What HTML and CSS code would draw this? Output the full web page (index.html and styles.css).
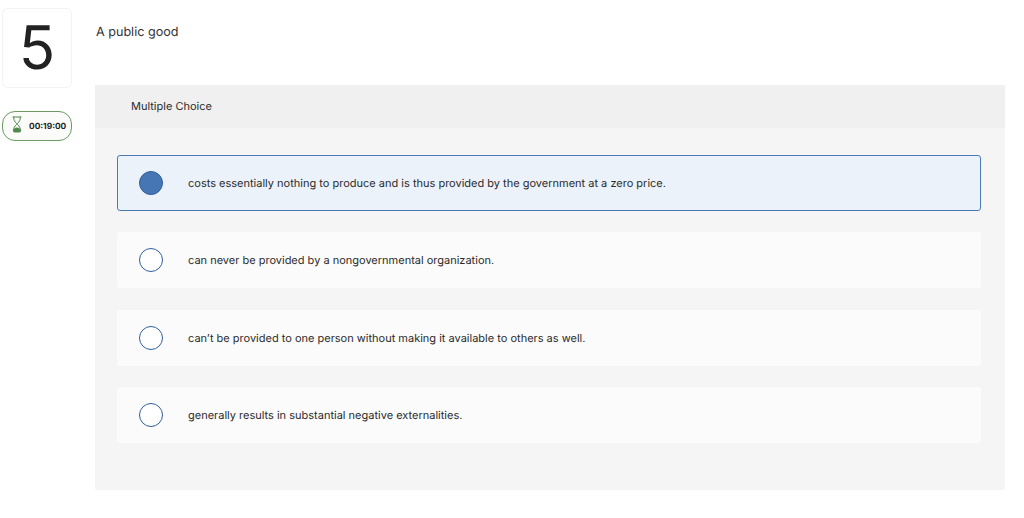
FILE: index.html
```html
<!DOCTYPE html>
<html lang="en">
<head>
<meta charset="utf-8">
<title>Question 5</title>
<link rel="stylesheet" href="styles.css">
</head>
<body>
<div class="page">
  <aside class="side">
    <div class="num">5</div>
    <div class="timer">
      <svg class="glass" width="10" height="17" viewBox="0 0 10 17" aria-hidden="true">
        <path d="M1 1h8M1.7 1c0 3.6 1 4.6 2.4 5.8.8.7.8 1.5 0 2.2C2.6 10.300 1.700 11.500 1.500 14M8.300 1c0 3.600-1 4.600-2.400 5.800-.8.7-.8 1.500 0 2.200 1.500 1.300 2.400 2.500 2.600 5" fill="none" stroke="#4f8a4c" stroke-width="1" stroke-linecap="round"/>
        <path d="M1 15c0-2 2.400-3.400 4-3.400s4 1.400 4 3.400c0 1-1 1.600-4 1.600s-4-.6-4-1.600z" fill="#4f8a4c"/>
      </svg>
      <span class="time">00:19:00</span>
    </div>
  </aside>
  <main class="main">
    <p class="prompt">A public good</p>
    <section class="panel">
      <header class="panel-head">Multiple Choice</header>
      <div class="options">
        <div class="option selected"><span class="radio"></span><span class="label">costs essentially nothing to produce and is thus provided by the government at a zero price.</span></div>
        <div class="option"><span class="radio"></span><span class="label">can never be provided by a nongovernmental organization.</span></div>
        <div class="option"><span class="radio"></span><span class="label">can’t be provided to one person without making it available to others as well.</span></div>
        <div class="option"><span class="radio"></span><span class="label">generally results in substantial negative externalities.</span></div>
      </div>
    </section>
  </main>
</div>
</body>
</html>
```
FILE: styles.css
```css
* { box-sizing: border-box; }
html, body { margin: 0; padding: 0; background: #fff; }
body { font-family: "Inter", "Liberation Sans", sans-serif; color: #2b2b2b; height: 518px; overflow: hidden; text-rendering: geometricPrecision; }
.page { display: flex; padding: 8px 19px 0 2px; gap: 23px; }
.side { width: 70px; flex: none; display: flex; flex-direction: column; gap: 23px; }
.num {
  height: 80px; border: 1px solid #f3f3f3; border-radius: 6px;
  display: flex; align-items: center; justify-content: center;
  font-size: 60px; font-weight: 400; color: #222; line-height: 1;
}
.timer {
  height: 30px; border: 1px solid #6b9a62; border-radius: 13px; background: #fbfcfa;
  display: flex; align-items: center; padding-left: 9px; gap: 7px;
}
.glass { flex: none; margin-top: -3px; }
.time { font-size: 8.4px; font-weight: 700; color: #222; margin-top: 2px; }
.main { flex: 1; min-width: 0; }
.prompt { margin: 0; height: 77px; padding: 16px 0 0 1px; font-size: 12.6px; line-height: 18px; color: #333; }
.panel { height: 405px; background: #f5f5f5; border-radius: 2px; }
.panel-head { height: 43px; background: #f0f0f0; padding: 0 0 1px 36px; display: flex; align-items: center; font-size: 11px; color: #2b2b2b; }
.options { padding: 27px 24px 0 22px; display: flex; flex-direction: column; gap: 21.4px; }
.option {
  height: 56px; background: #fbfbfb; border-radius: 3px; border: 1px solid transparent;
  display: flex; align-items: center; padding-left: 21px;
}
.option.selected { background: #ebf2fa; border-color: #4a7ab5; }
.radio { width: 24px; height: 24px; border-radius: 50%; border: 1px solid #2f5f9a; background: #fff; flex: none; }
.selected .radio { background: #4676b3; }
.label { margin-left: 25px; font-size: 11px; color: #2b2b2b; white-space: nowrap; }
```
